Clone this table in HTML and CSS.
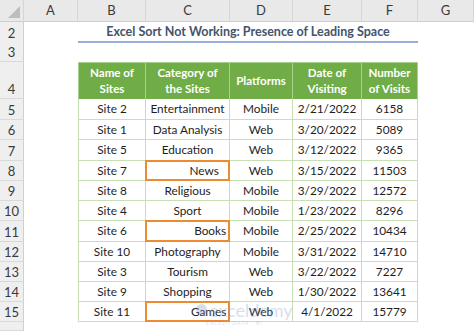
FILE: index.html
```html
<!DOCTYPE html>
<html lang="en">
<head>
<meta charset="UTF-8" />
<meta name="viewport" content="width=device-width, initial-scale=1" />
<title>Excel Sort Not Working</title>
<link rel="stylesheet" href="styles.css">
</head>
<body>
  <div class="sheet">
    <!-- column letters -->
    <div class="row colhead">
      <div class="corner"><span class="tri"></span></div>
      <div>A</div><div>B</div><div>C</div><div>D</div><div>E</div><div>F</div><div>G</div>
    </div>

    <div class="row r20">
      <div class="rh">2</div><div></div>
      <div class="title">Excel Sort Not Working: Presence of Leading Space</div>
      <div></div>
    </div>
    <div class="row r20">
      <div class="rh">3</div>
    </div>

    <div class="row r-head">
      <div class="rh">4</div><div></div>
      <div class="th first">Name of<br>Sites</div>
      <div class="th">Category of<br>the Sites</div>
      <div class="th">Platforms</div>
      <div class="th">Date of<br>Visiting</div>
      <div class="th">Number<br>of Visits</div>
      <div></div>
    </div>

    <div id="rows"></div>

    <div class="row r-last">
      <div class="rh"></div>
    </div>

    <div class="mark">
      <span class="mark-logo"></span>
      <span class="mark-name">exceldemy</span>
      <span class="mark-sub">EXCEL · DATA · BI</span>
    </div>
  </div>

<script src="script.js"></script>
</body>
</html>
```

FILE: styles.css
```css
body { margin: 0; background: #fff; font-family: Lato, "Open Sans", sans-serif; }
.sheet { position: relative; width: 474px; height: 331px; overflow: hidden; }

.row { display: grid; grid-template-columns: 24px 54px 68px 84px 63px 69px 56px 56px; }
.r20 { height: 20px; }
.r21 { height: 21px; }
.r-head { height: 37px; }
.r-last { height: 9px; }

/* column letters */
.colhead { height: 22px; background: #e9e9e9; border-bottom: 1px solid #cfcfcf; box-sizing: border-box; }
.colhead div { border-right: 1px solid #d6d6d6; text-align: center; line-height: 21px; font-size: 13px; color: #3a3a3a; }
.corner { position: relative; background: #e9e9e9; }
.tri { position: absolute; right: 3px; bottom: 3px; width: 0; height: 0;
  border-left: 12px solid transparent; border-bottom: 12px solid #bdbdbd; }

/* row numbers */
.rh { background: #efefef; border-right: 1px solid #cfcfcf; border-bottom: 1px solid #d9d9d9; box-sizing: border-box;
  display: flex; align-items: flex-end; justify-content: center; padding-bottom: 1px;
  font-size: 13px; color: #3a3a3a; line-height: 16px; }

.title { grid-column: span 5; border-bottom: 2px solid #9aaed8; box-sizing: border-box;
  text-align: center; font-weight: bold; font-size: 12.5px; color: #44546a; line-height: 19px; }

/* table */
.th { background: #70ad47; color: #fff; font-weight: bold; font-size: 11.6px; line-height: 16px; text-align: center;
  display: flex; align-items: center; justify-content: center;
  border-right: 1px solid #a9d08e; border-top: 1px solid #a9d08e; box-sizing: border-box; }
.th.first { border-left: 1px solid #a9d08e; }

.td { font-size: 11.8px; color: #1e1e1e; text-align: center; line-height: 19px; white-space: pre;
  border-right: 1px solid #c6e0b4; border-bottom: 1px solid #c6e0b4; box-sizing: border-box; }
.td.first { border-left: 1px solid #c6e0b4; }
.td.mark-cell { position: relative; }
.td.mark-cell::after { content: ""; position: absolute; left: -1px; right: -1px; top: -1px; bottom: -1px;
  border: 2px solid #ee8a2f; }

/* watermark */
.mark { position: absolute; left: 196px; top: 299px; width: 95px; height: 28px; opacity: 0.3; pointer-events: none; }
.mark-logo { position: absolute; left: 0; top: 5px; width: 11px; height: 11px; border-radius: 50%; background: #7b93c8; }
.mark-name { position: absolute; left: 13px; top: 0; font-size: 18px; color: #7b93c8; font-family: Lato, sans-serif; }
.mark-sub { position: absolute; left: 10px; top: 21px; font-size: 5px; letter-spacing: 1px; color: #7b93c8; }
```

FILE: script.js
```js
// rows 5 to 15 of the sheet
const data = [
  ["Site 2", "Entertainment", "Mobile", "2/21/2022", "6158"],
  ["Site 1", "Data Analysis", "Web", "3/20/2022", "5089"],
  ["Site 5", "Education", "Web", "3/12/2022", "9365"],
  ["Site 7", "           News", "Web", "3/15/2022", "11503"],
  ["Site 8", "Religious", "Mobile", "3/29/2022", "12572"],
  ["Site 4", "Sport", "Mobile", "1/23/2022", "8296"],
  ["Site 6", "               Books", "Mobile", "2/25/2022", "10434"],
  ["Site 10", "Photography", "Mobile", "3/31/2022", "14710"],
  ["Site 3", "Tourism", "Web", "3/22/2022", "7227"],
  ["Site 9", "Shopping", "Web", "1/30/2022", "13641"],
  ["Site 11", "              Games", "Web", "4/1/2022", "15779"]
];
const heights = [21, 20, 21, 20, 20, 20, 21, 20, 20, 20, 20];

const wrap = document.getElementById("rows");
data.forEach((row, i) => {
  const r = document.createElement("div");
  r.className = "row r" + heights[i];

  const rh = document.createElement("div");
  rh.className = "rh";
  rh.textContent = i + 5;
  r.appendChild(rh);
  r.appendChild(document.createElement("div"));

  row.forEach((val, j) => {
    const td = document.createElement("div");
    td.className = "td" + (j === 0 ? " first" : "");
    // leading spaces get the orange box
    if (val.startsWith(" ")) td.className += " mark-cell";
    td.textContent = val;
    r.appendChild(td);
  });
  r.appendChild(document.createElement("div"));
  wrap.appendChild(r);
});
```
